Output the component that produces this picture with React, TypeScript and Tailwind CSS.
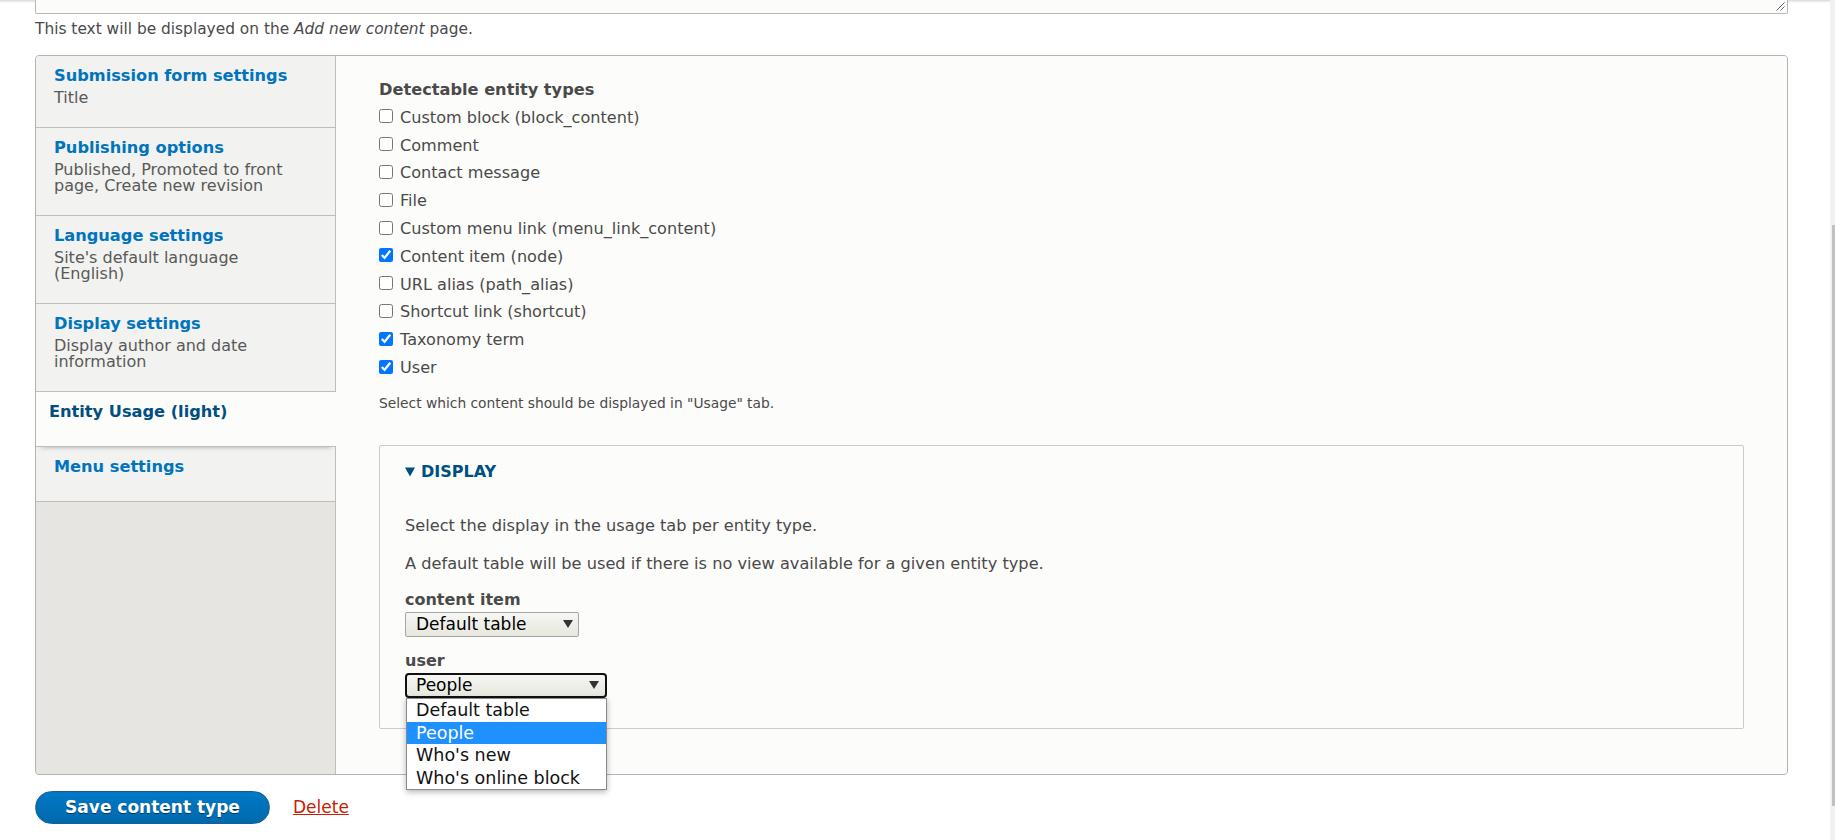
const tabs = [
  { title: "Submission form settings", summary: "Title" },
  { title: "Publishing options", summary: "Published, Promoted to front page, Create new revision" },
  { title: "Language settings", summary: "Site's default language (English)" },
  { title: "Display settings", summary: "Display author and date information" },
  { title: "Entity Usage (light)", summary: "", active: true },
  { title: "Menu settings", summary: "" },
];

const entityTypes: [string, boolean][] = [
  ["Custom block (block_content)", false],
  ["Comment", false],
  ["Contact message", false],
  ["File", false],
  ["Custom menu link (menu_link_content)", false],
  ["Content item (node)", true],
  ["URL alias (path_alias)", false],
  ["Shortcut link (shortcut)", false],
  ["Taxonomy term", true],
  ["User", true],
];

const options = ["Default table", "People", "Who's new", "Who's online block"];

function Caret() {
  return (
    <svg width="10" height="8" viewBox="0 0 10 8" className="shrink-0">
      <polygon points="0,0 10,0 5,8" fill="#333" />
    </svg>
  );
}

export default function App() {
  return (
    <div className="flex w-full min-h-[840px] bg-white font-['DejaVu_Sans',sans-serif] text-[#4a4a4a]">
      <div className="relative flex-1 pl-[35px] pr-[42px] pb-[16px]">
        {/* toolbar shadow */}
        <div className="absolute top-0 left-0 right-0 h-[3px] bg-gradient-to-b from-black/15 to-transparent" />

        {/* bottom of the description textarea */}
        <div className="relative h-[14px] border border-t-0 border-[#b8b8b8] rounded-b-[2px] bg-[#fcfcfa]">
          <svg className="absolute right-[2px] bottom-[2px]" width="9" height="9" viewBox="0 0 9 9">
            <line x1="8.5" y1="0.5" x2="0.5" y2="8.5" stroke="#666" strokeWidth="1" />
            <line x1="8.5" y1="4.5" x2="4.5" y2="8.5" stroke="#666" strokeWidth="1" />
          </svg>
        </div>
        <p className="mt-[5px] text-[15.4px] leading-[20px]">
          This text will be displayed on the <em>Add new content</em> page.
        </p>

        {/* vertical tabs */}
        <div className="mt-[16px] flex border border-[#b3b3af] rounded-[4px] bg-[#e6e5e1]">
          <div className="w-[300px] shrink-0 flex flex-col">
            {tabs.map((t, i) =>
              t.active ? (
                <div
                  key={t.title}
                  className="relative z-[1] bg-[#fcfcfa] border-b border-[#bfbfba] pl-[13px] pt-[9px] pb-[23px] shadow-[0_5px_5px_-5px_rgba(0,0,0,0.3)]"
                >
                  <div className="text-[16.2px] font-bold leading-[22px] text-[#004f80]">{t.title}</div>
                </div>
              ) : (
                <div
                  key={t.title}
                  className={
                    i === 0
                      ? "rounded-tl-[3px] bg-[#f2f2f0] border-b border-r border-[#bfbfba] pl-[18px] pr-[36px] pt-[9px] pb-[20px]"
                      : "bg-[#f2f2f0] border-b border-r border-[#bfbfba] pl-[18px] pr-[36px] pt-[9px] pb-[20px]"
                  }
                >
                  <div className="text-[16.2px] font-bold leading-[22px] text-[#0074bd]">{t.title}</div>
                  <div className="mt-[3px] text-[16px] leading-[16.5px] text-[#595959]">{t.summary}</div>
                </div>
              )
            )}
            <div className="flex-1 rounded-bl-[3px] border-r border-[#bfbfba] bg-[#e6e5e1]" />
          </div>

          {/* pane */}
          <div className="flex-1 rounded-r-[3px] bg-[#fcfcfa] pl-[43px] pr-[43px] pt-[23px] pb-[45px]">
            <div className="text-[16.2px] font-bold leading-[22px]">Detectable entity types</div>
            <div className="mt-[3px]">
              {entityTypes.map(([label, checked]) => (
                <label key={label} className="flex items-center h-[27.8px] text-[16.1px]">
                  <input
                    type="checkbox"
                    defaultChecked={checked}
                    className="m-0 mr-[7px] w-[14px] h-[14px] -mt-[3px]"
                  />
                  {label}
                </label>
              ))}
            </div>
            <p className="mt-[12px] text-[13.8px] leading-[18px]">
              Select which content should be displayed in "Usage" tab.
            </p>

            {/* details */}
            <div className="mt-[33px] border border-[#ccc] rounded-[2px] bg-[#fcfcfa] pl-[25px] pr-[25px] pb-[30px]">
              <div className="flex items-center pt-[15px] pb-[14px] h-[52px] text-[16px] font-bold leading-[22px] text-[#004f80]">
                <svg width="10" height="10" viewBox="0 0 10 10" className="mr-[6px]">
                  <polygon points="0,0.5 10,0.5 5,9.5" fill="#004f80" />
                </svg>
                DISPLAY
              </div>
              <p className="mt-[17px] text-[16.2px] leading-[22px]">
                Select the display in the usage tab per entity type.
              </p>
              <p className="mt-[16px] text-[16.2px] leading-[22px]">
                A default table will be used if there is no view available for a given entity type.
              </p>

              <div className="mt-[15px] text-[16px] font-bold leading-[20px]">content item</div>
              <div className="mt-[2px] flex items-center justify-between w-[174px] h-[25px] border border-[#a6a6a6] rounded-[2px] bg-gradient-to-b from-[#f6f6f3] to-[#e7e7df] pl-[10px] pr-[5px] text-[17px] text-black">
                <span className="leading-[23px]">Default table</span>
                <Caret />
              </div>

              <div className="mt-[14px] text-[16px] font-bold leading-[20px]">user</div>
              <div className="relative mt-[2px] w-[202px]">
                <div className="flex items-center justify-between w-[202px] h-[25px] border-2 border-[#111] rounded-[4px] bg-gradient-to-b from-[#f6f6f3] to-[#e7e7df] pl-[9px] pr-[6px] text-[17px] text-black">
                  <span className="leading-[21px]">People</span>
                  <Caret />
                </div>
                <div className="absolute left-[1px] top-[25px] z-10 w-[201px] border border-[#8a8a8a] bg-white shadow-[0_2px_6px_rgba(0,0,0,0.3)]">
                  {options.map((o) => (
                    <div
                      key={o}
                      className={
                        o === "People"
                          ? "h-[22.6px] pl-[9px] text-[17.5px] leading-[22.6px] bg-[#1e90ff] text-white"
                          : "h-[22.6px] pl-[9px] text-[17.5px] leading-[22.6px] text-[#111]"
                      }
                    >
                      {o}
                    </div>
                  ))}
                </div>
              </div>
            </div>
          </div>
        </div>

        {/* actions */}
        <div className="mt-[16px] flex items-center">
          <button className="h-[33px] w-[235px] rounded-full border border-[#1e5c90] bg-gradient-to-b from-[#0079c4] to-[#0069ae] text-white font-bold text-[17px] [text-shadow:0_1px_rgba(0,0,0,0.5)]">
            Save content type
          </button>
          <a href="#" className="ml-[23px] text-[17px] text-[#c72100] underline">
            Delete
          </a>
        </div>
      </div>

      {/* scrollbar */}
      <div className="w-[5px] shrink-0 bg-[#f1f1f1] pt-[225px]">
        <div className="ml-[2px] h-[581px] bg-[#c1c1c1]" />
      </div>
    </div>
  );
}
